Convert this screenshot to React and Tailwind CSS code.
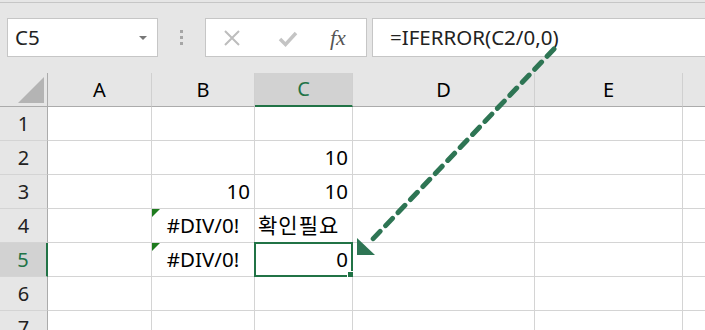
import React from 'react'

const cols = [
    { name: 'A', w: 'w-[104px]' },
    { name: 'B', w: 'w-[103px]' },
    { name: 'C', w: 'w-[98px]' },
    { name: 'D', w: 'w-[182px]' },
    { name: 'E', w: 'w-[148px]' },
    { name: '', w: 'w-[40px]' },
]

const rows = [
    { n: 1, cells: {} },
    { n: 2, cells: { C: { v: '10', align: 'right' } } },
    { n: 3, cells: { B: { v: '10', align: 'right' }, C: { v: '10', align: 'right' } } },
    { n: 4, cells: { B: { v: '#DIV/0!', align: 'center', flag: true }, C: { v: '확인필요', align: 'left', ko: true } } },
    { n: 5, cells: { B: { v: '#DIV/0!', align: 'center', flag: true }, C: { v: '0', align: 'right', active: true } } },
    { n: 6, cells: {} },
    { n: 7, cells: {} },
]

function Cell({ col, cell }) {
    const align = cell?.align === 'right' ? 'justify-end pr-[4px]' : cell?.align === 'center' ? 'justify-center' : 'justify-start pl-[3px]'
    return (
        <div className={`relative flex items-center h-[34px] shrink-0 border-r border-b border-[#d4d4d4] bg-white ${col.w} ${align}`}>
            {cell?.flag && (
                <div className='absolute left-0 top-0 w-0 h-0 border-t-[8px] border-r-[8px] border-t-[#1e7b1e] border-r-transparent' />
            )}
            {cell?.active && (
                <div className='absolute -left-[1px] -top-[1px] right-[-1px] bottom-[-1px] border-2 border-[#217346]'>
                    <div className='absolute -right-[4px] -bottom-[4px] w-[6px] h-[6px] bg-[#217346] border border-white box-content' />
                </div>
            )}
            <span className={`${cell?.ko ? 'text-[21px] tracking-[1px]' : 'text-[20.5px]'} leading-none text-black whitespace-nowrap`}>{cell?.v}</span>
        </div>
    )
}

export default function App() {
    return (
        <div className="relative w-[705px] h-[330px] overflow-hidden bg-[#e6e6e6] font-['Noto_Sans','Noto_Sans_CJK_KR',sans-serif]">
            {/* formula bar */}
            <div className='h-[73px] pt-[2px]'>
                <div className='border-t border-[#c6c6c6] pt-[15px] flex items-start'>
                    <div className='ml-[7px] w-[151px] h-[39px] bg-white border border-[#c6c6c6] flex items-center justify-between pl-[7px] pr-[10px]'>
                        <span className='text-[20.5px] text-[#222] leading-none'>C5</span>
                        <div className='w-0 h-0 border-l-[4px] border-r-[4px] border-t-[4px] border-l-transparent border-r-transparent border-t-[#777]' />
                    </div>
                    <div className='w-[47px] h-[39px] flex flex-col items-center justify-center gap-[3px]'>
                        <div className='w-[3px] h-[3px] bg-[#a6a6a6]' />
                        <div className='w-[3px] h-[3px] bg-[#a6a6a6]' />
                        <div className='w-[3px] h-[3px] bg-[#a6a6a6]' />
                    </div>
                    <div className='w-[162px] h-[39px] bg-white border border-[#c6c6c6] flex items-center pl-[17px]'>
                        <svg width='18' height='18' viewBox='0 0 18 18' className='mt-[1px]'>
                            <path d='M2 2 L16 16 M16 2 L2 16' stroke='#bdbdbd' strokeWidth='2' fill='none' />
                        </svg>
                        <svg width='20' height='18' viewBox='0 0 20 18' className='ml-[37px] mt-[2px]'>
                            <path d='M2 9 L7.5 14.5 L18 3' stroke='#c4c4c4' strokeWidth='3.5' fill='none' strokeLinejoin='miter' />
                        </svg>
                        <span className="ml-[32px] font-['Liberation_Serif',serif] italic text-[22px] text-[#555] leading-none">fx</span>
                    </div>
                    <div className='ml-[5px] flex-1 h-[39px] bg-white border border-[#c6c6c6] border-r-0 flex items-center pl-[17px]'>
                        <span className='text-[20.5px] text-[#222] leading-none'>=IFERROR(C2/0,0)</span>
                    </div>
                </div>
            </div>

            {/* column headers */}
            <div className='flex h-[34px]'>
                <div className='relative w-[48px] shrink-0 h-[34px] border-r border-b border-[#ababab]'>
                    <div className='absolute left-[18px] top-[4px] w-0 h-0 border-b-[26px] border-l-[26px] border-b-[#b4b4b4] border-l-transparent' />
                </div>
                {cols.map((c) => (
                    <div
                        key={c.name + 'h'}
                        className={`flex items-center justify-center h-[34px] shrink-0 border-r border-[#d0d0d0] ${c.w} ${c.name === 'C' ? 'bg-[#d2d2d2] border-b-2 border-b-[#217346] text-[#217346]' : 'border-b border-b-[#ababab] text-black'}`}
                    >
                        <span className='text-[20px] leading-none'>{c.name}</span>
                    </div>
                ))}
            </div>

            {/* rows */}
            {rows.map((r) => (
                <div key={r.n} className='flex'>
                    <div className={`w-[48px] shrink-0 h-[34px] flex items-center justify-center border-b border-[#d4d4d4] ${r.n === 5 ? 'bg-[#d2d2d2] border-r-2 border-r-[#217346] text-[#217346]' : 'border-r border-r-[#ababab] text-[#222]'}`}>
                        <span className='text-[20px] leading-none'>{r.n}</span>
                    </div>
                    {cols.map((c) => (
                        <Cell key={c.name + r.n} col={c} cell={r.cells[c.name]} />
                    ))}
                </div>
            ))}

            {/* dashed arrow */}
            <svg className='absolute left-0 top-0 pointer-events-none' width='705' height='330'>
                <line x1='554' y1='49' x2='370' y2='242' stroke='#2e7554' strokeWidth='5' strokeDasharray='10 8' strokeLinecap='round' />
                <polygon points='357,238 357,255 375,255' fill='#2e7554' />
            </svg>
        </div>
    )
}
